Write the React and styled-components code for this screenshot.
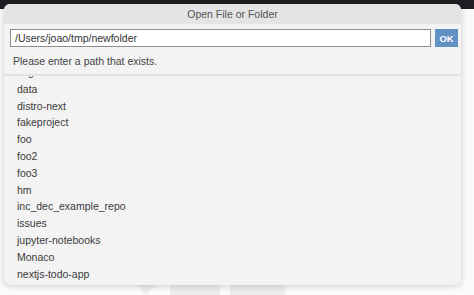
import React from 'react'
import styled, { createGlobalStyle } from 'styled-components'

const folders = [
  'img',
  'data',
  'distro-next',
  'fakeproject',
  'foo',
  'foo2',
  'foo3',
  'hm',
  'inc_dec_example_repo',
  'issues',
  'jupyter-notebooks',
  'Monaco',
  'nextjs-todo-app',
]

const Global = createGlobalStyle`
html,body{margin:0;padding:0;}
body{
  width:474px;
  height:295px;
  overflow:hidden;
  font-family:"Liberation Sans",Arial,sans-serif;
  background:linear-gradient(#1e1f23 0,#1e1f23 9px,#fafafa 9px);
}
`

const Page = styled.div`
position:relative;
height:295px;
padding:4px 13px 0 4px;
box-sizing:border-box;
`

const Shapes = styled.div`
position:absolute;
left:0;
right:0;
bottom:0;
height:14px;
display:flex;
gap:10px;
padding-left:132px;
`
const Shape = styled.div`
width:${p => p.w}px;
height:14px;
background:#ececec;
clip-path:${p => p.tri ? 'polygon(0 0,100% 0,50% 100%)' : 'none'};
`

const Dialog = styled.div`
position:relative;
z-index:1;
height:281px;
background:#f3f3f3;
border-radius:6px;
box-shadow:0 1px 6px rgba(0,0,0,0.18);
display:flex;
flex-direction:column;
overflow:hidden;
`

const TitleBar = styled.div`
height:20px;
background:#e4e4e4;
display:flex;
align-items:center;
justify-content:center;
font-size:10.5px;
color:#555;
`

const InputRow = styled.div`
display:flex;
gap:4px;
padding:5px 3px 0 6px;
`

const PathInput = styled.div`
flex:1;
height:18px;
box-sizing:border-box;
background:#fff;
border:1px solid #8d8d8d;
display:flex;
align-items:center;
padding-left:4px;
font-size:10.5px;
color:#333;
`

const OkButton = styled.div`
width:23px;
height:18px;
background:#6190c3;
color:#fff;
font-size:9.5px;
font-weight:bold;
display:flex;
align-items:center;
justify-content:center;
`

const Message = styled.div`
height:27px;
display:flex;
align-items:center;
padding-left:9px;
font-size:10.5px;
color:#444;
border-bottom:2px solid #e3e3e3;
`

const List = styled.div`
flex:1;
overflow:hidden;
`
const ListInner = styled.div`
margin-top:-12px;
`
const Row = styled.div`
height:16.8px;
line-height:16.8px;
padding-left:13px;
font-size:10.5px;
color:#3b3b3b;
`

export default function App() {
  return (
    <>
      <Global />
      <Page>
        <Shapes>
          <Shape w={28} tri />
          <Shape w={50} />
          <Shape w={55} />
        </Shapes>
        <Dialog>
          <TitleBar>Open File or Folder</TitleBar>
          <InputRow>
            <PathInput>/Users/joao/tmp/newfolder</PathInput>
            <OkButton>OK</OkButton>
          </InputRow>
          <Message>Please enter a path that exists.</Message>
          <List>
            <ListInner>
              {folders.map(f => <Row key={f}>{f}</Row>)}
            </ListInner>
          </List>
        </Dialog>
      </Page>
    </>
  )
}
